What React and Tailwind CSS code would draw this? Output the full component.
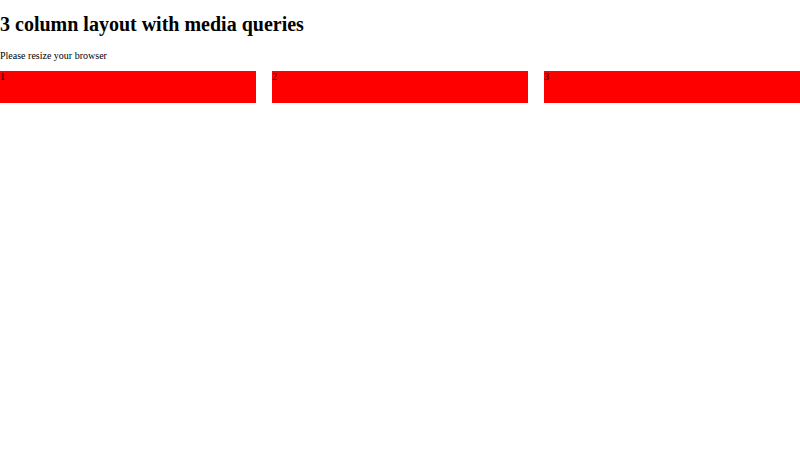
export default function App() {
  return (
    <div className="min-h-[450px] bg-white font-['Liberation_Serif',serif] text-black">
      <div className="h-[13.4px]" />
      <h1 className="text-[20px] font-bold leading-[23px]">
        3 column layout with media queries
      </h1>
      <p className="mt-[13.4px] text-[10px] leading-[11.5px]">Please resize your browser</p>
      <div className="mt-[10px] grid grid-cols-3 gap-[16px]">
        <div className="h-[31.25px] bg-[#ff0000] text-[10px] leading-[11.5px]">1</div>
        <div className="h-[31.25px] bg-[#ff0000] text-[10px] leading-[11.5px]">2</div>
        <div className="h-[31.25px] bg-[#ff0000] text-[10px] leading-[11.5px]">3</div>
      </div>
    </div>
  );
}
